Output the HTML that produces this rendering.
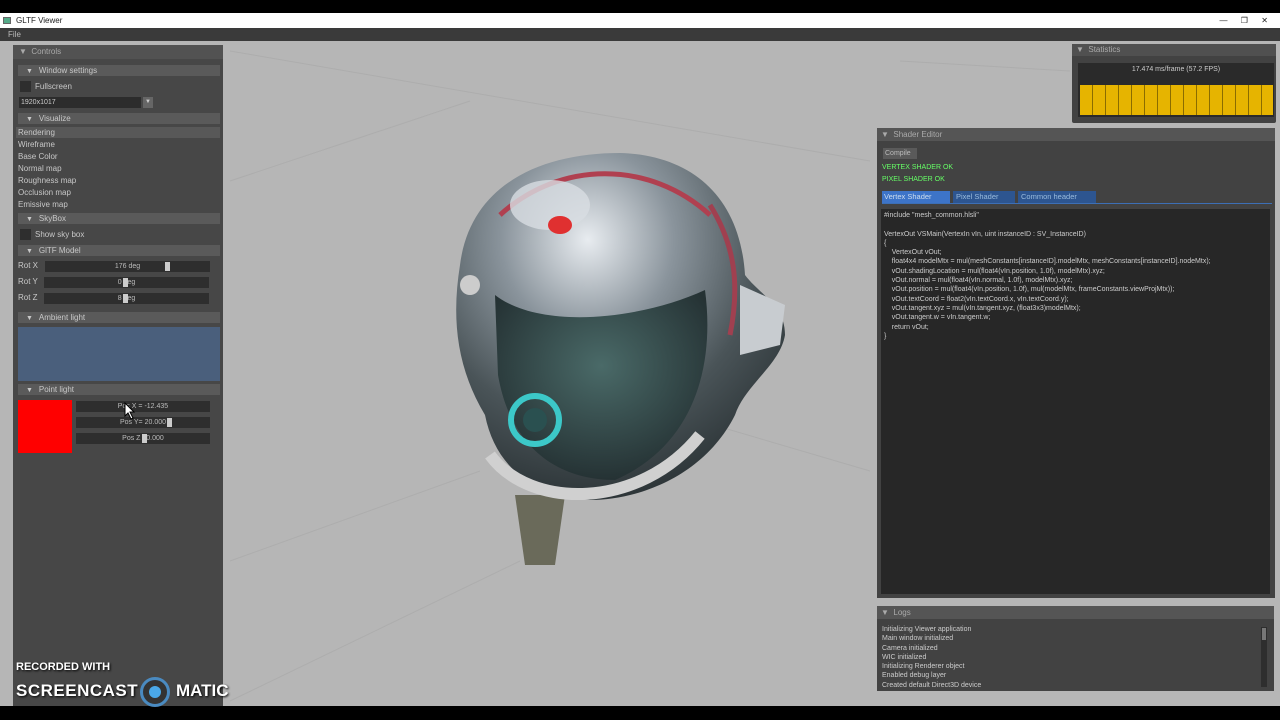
<!DOCTYPE html>
<html><head><meta charset="utf-8"><style>
*{margin:0;padding:0;box-sizing:border-box}
body{width:1280px;height:720px;background:#b6b6b6;font-family:"Liberation Sans",sans-serif;font-size:8px;color:#ddd;position:relative;overflow:hidden}
.a{position:absolute}
.hd{position:absolute;background:#5a5a5a;color:#c8c8c8;height:11px;line-height:11px;padding-left:8px;font-size:8px}
.hd:before{content:"▼ ";font-size:7px;margin-right:4px}
.it{position:absolute;left:18px;color:#c8c8c8;font-size:8px}
.sl{position:absolute;background:#2e2e2e;height:11px;color:#bbb;text-align:center;line-height:11px;font-size:7px}
.kn{position:absolute;top:1px;width:5px;height:9px;background:#ccc}
.code div{white-space:pre;line-height:9.3px;font-size:7px;color:#ccc}
</style></head><body>
<div class="a" style="left:0;top:0;width:1280px;height:13px;background:#000"></div>
<div class="a" style="left:0;top:13px;width:1280px;height:15px;background:#fff;color:#222;font-size:8px;line-height:15px;padding-left:16px">GLTF Viewer<span style="position:absolute;right:12px">—&nbsp;&nbsp;&nbsp;&nbsp;&nbsp;&nbsp;❐&nbsp;&nbsp;&nbsp;&nbsp;&nbsp;&nbsp;✕</span></div>
<div class="a" style="left:3px;top:17px;width:8px;height:7px;background:#5a8;border:1px solid #666"></div>
<div class="a" style="left:0;top:28px;width:1280px;height:13px;background:#3a3a3a;color:#bbb;line-height:13px;padding-left:8px">File</div>
<div class="a" style="left:0;top:706px;width:1280px;height:14px;background:#000"></div>
<svg class="a" style="left:0;top:41px" width="1280" height="665"><g stroke="#adadad" stroke-width="1" fill="none"><path d="M230 10 L870 120"/><path d="M900 20 L1070 30"/><path d="M230 140 L470 60"/><path d="M230 520 L480 430"/><path d="M700 380 L870 430"/><path d="M230 660 L520 520"/></g></svg>
<svg class="a" style="left:440px;top:145px" width="360" height="430">
<defs><radialGradient id="g1" cx=".4" cy=".25" r=".75"><stop offset="0" stop-color="#e8ecf0"/><stop offset=".35" stop-color="#8a949c"/><stop offset=".7" stop-color="#4a5458"/><stop offset="1" stop-color="#2d3538"/></radialGradient>
<radialGradient id="g2" cx=".5" cy=".4" r=".6"><stop offset="0" stop-color="#4a6a68"/><stop offset="1" stop-color="#253234"/></radialGradient></defs>
<path d="M20 120 C30 40 100 8 180 8 C250 10 300 50 305 130 C320 150 345 160 345 190 C340 220 305 240 295 270 C265 330 200 355 150 355 C90 350 55 320 45 270 C15 220 12 170 20 120Z" fill="url(#g1)"/>
<path d="M55 150 C100 185 200 175 265 145 C275 220 255 300 175 335 C115 335 70 300 58 230Z" fill="url(#g2)"/>
<path d="M60 70 C120 15 210 15 270 70" stroke="#b04050" stroke-width="5" fill="none"/>
<path d="M270 60 C295 100 300 140 290 190" stroke="#a04050" stroke-width="5" fill="none"/>
<ellipse cx="110" cy="60" rx="40" ry="25" fill="#d8dde2" opacity=".8"/>
<ellipse cx="120" cy="80" rx="12" ry="9" fill="#e03030"/>
<circle cx="95" cy="275" r="24" fill="none" stroke="#3cc8c8" stroke-width="6"/>
<circle cx="95" cy="275" r="12" fill="#2a5050"/>
<path d="M75 350 L125 350 L115 420 L85 420Z" fill="#6a6a5a"/>
<path d="M50 310 C90 365 200 365 260 290" stroke="#d0d0d0" stroke-width="12" fill="none"/>
<path d="M300 140 L345 160 L340 200 L300 210Z" fill="#c8ccd0"/>
<circle cx="30" cy="140" r="10" fill="#ccc"/>
</svg>
<div class="a" style="left:13px;top:45px;width:210px;height:661px;background:#474747"></div>
<div class="a" style="left:13px;top:45px;width:210px;height:14px;background:#525252;color:#aaa;line-height:14px;padding-left:6px">▼ &nbsp;Controls</div>
<div class="hd" style="left:18px;top:65px;width:202px">Window settings</div>
<div class="a" style="left:20px;top:81px;width:11px;height:11px;background:#2e2e2e"></div>
<div class="it" style="left:35px;top:82px">Fullscreen</div>
<div class="a" style="left:19px;top:97px;width:122px;height:11px;background:#2c2c2c;color:#ccc;padding-left:2px;line-height:11px;font-size:7px">1920x1017</div>
<div class="a" style="left:143px;top:97px;width:10px;height:11px;background:#666;color:#ccc;font-size:6px;text-align:center;line-height:11px">▼</div>
<div class="hd" style="left:18px;top:113px;width:202px">Visualize</div>
<div class="a" style="left:16px;top:127px;width:204px;height:11px;background:#585858"></div>
<div class="it" style="top:128px">Rendering</div>
<div class="it" style="top:140px">Wireframe</div>
<div class="it" style="top:152px">Base Color</div>
<div class="it" style="top:164px">Normal map</div>
<div class="it" style="top:176px">Roughness map</div>
<div class="it" style="top:188px">Occlusion map</div>
<div class="it" style="top:200px">Emissive map</div>
<div class="hd" style="left:18px;top:213px;width:202px">SkyBox</div>
<div class="a" style="left:20px;top:229px;width:11px;height:11px;background:#2e2e2e"></div>
<div class="it" style="left:35px;top:230px">Show sky box</div>
<div class="hd" style="left:18px;top:245px;width:202px">GlTF Model</div>
<div class="it" style="top:261px">Rot X</div><div class="sl" style="left:45px;top:261px;width:165px">176 deg<div class="kn" style="left:120px"></div></div>
<div class="it" style="top:277px">Rot Y</div><div class="sl" style="left:44px;top:277px;width:165px">0 deg<div class="kn" style="left:79px"></div></div>
<div class="it" style="top:293px">Rot Z</div><div class="sl" style="left:44px;top:293px;width:165px">8 deg<div class="kn" style="left:79px"></div></div>
<div class="hd" style="left:18px;top:312px;width:202px">Ambient light</div>
<div class="a" style="left:18px;top:327px;width:202px;height:54px;background:#4a5f7c"></div>
<div class="hd" style="left:18px;top:384px;width:202px">Point light</div>
<div class="a" style="left:18px;top:400px;width:54px;height:53px;background:#f00"></div>
<div class="sl" style="left:76px;top:401px;width:134px">Pos X = -12.435</div>
<div class="sl" style="left:76px;top:417px;width:134px">Pos Y= 20.000<div class="kn" style="left:91px"></div></div>
<div class="sl" style="left:76px;top:433px;width:134px">Pos Z &nbsp;&nbsp;0.000<div class="kn" style="left:66px"></div></div>
<svg class="a" style="left:124px;top:402px" width="12" height="18"><path d="M1 1 L1 14 L4 11 L7 17 L9 16 L6 10 L10 10Z" fill="#fff" stroke="#000" stroke-width="1"/></svg>
<div class="a" style="left:16px;top:661px;color:#fff;font-weight:bold;font-size:11px;text-shadow:1px 1px 2px #000">RECORDED WITH</div>
<div class="a" style="left:16px;top:681px;color:#fff;font-weight:bold;font-size:17px;letter-spacing:.5px;text-shadow:1px 1px 2px #000">SCREENCAST</div>
<div class="a" style="left:140px;top:677px;width:30px;height:30px;border-radius:50%;border:3px solid #4a8ac0;background:#333"></div>
<div class="a" style="left:149px;top:686px;width:12px;height:12px;border-radius:50%;background:#4aa8e8"></div>
<div class="a" style="left:176px;top:681px;color:#fff;font-weight:bold;font-size:17px;text-shadow:1px 1px 2px #000">MATIC</div>
<div class="a" style="left:1072px;top:44px;width:204px;height:79px;background:#424242;border-radius:2px"></div>
<div class="a" style="left:1072px;top:44px;width:204px;height:12px;background:#505050;color:#aaa;line-height:12px;padding-left:4px">▼ &nbsp;Statistics</div>
<div class="a" style="left:1078px;top:63px;width:196px;height:54px;background:#2a2a2a;color:#ccc;text-align:center;font-size:7px;padding-top:3px">17.474 ms/frame (57.2 FPS)</div>
<div class="a" style="left:1080px;top:85px;width:193px;height:30px;background:repeating-linear-gradient(90deg,#e6b400 0 12px,#8a6c00 12px 13px)"></div>
<div class="a" style="left:877px;top:128px;width:398px;height:470px;background:#424242"></div>
<div class="a" style="left:877px;top:128px;width:398px;height:13px;background:#555;color:#aaa;line-height:13px;padding-left:4px">▼ &nbsp;Shader Editor</div>
<div class="a" style="left:883px;top:148px;width:34px;height:11px;background:#5a5a5a;color:#bbb;line-height:11px;padding-left:2px;font-size:7px">Compile</div>
<div class="a" style="left:882px;top:164px;color:#6f6;font-size:7px">VERTEX SHADER OK</div>
<div class="a" style="left:882px;top:176px;color:#6f6;font-size:7px">PIXEL SHADER OK</div>
<div class="a" style="left:882px;top:203px;width:390px;height:1px;background:#3d6fb5"></div>
<div class="a" style="left:882px;top:191px;width:68px;height:12px;background:#3d74c8;color:#cde;line-height:12px;padding-left:2px;font-size:7.5px">Vertex Shader</div>
<div class="a" style="left:953px;top:191px;width:62px;height:12px;background:#2d5590;color:#9bd;line-height:12px;padding-left:3px;font-size:7.5px">Pixel Shader</div>
<div class="a" style="left:1018px;top:191px;width:78px;height:12px;background:#2d5590;color:#9bd;line-height:12px;padding-left:3px;font-size:7.5px">Common header</div>
<div class="a code" style="left:881px;top:209px;width:389px;height:385px;background:#272727;padding:2px 3px">
<div>#include "mesh_common.hlsli"</div><div> </div>
<div>VertexOut VSMain(VertexIn vIn, uint instanceID : SV_InstanceID)</div>
<div>{</div>
<div>    VertexOut vOut;</div>
<div>    float4x4 modelMtx = mul(meshConstants[instanceID].modelMtx, meshConstants[instanceID].nodeMtx);</div>
<div>    vOut.shadingLocation = mul(float4(vIn.position, 1.0f), modelMtx).xyz;</div>
<div>    vOut.normal = mul(float4(vIn.normal, 1.0f), modelMtx).xyz;</div>
<div>    vOut.position = mul(float4(vIn.position, 1.0f), mul(modelMtx, frameConstants.viewProjMtx));</div>
<div>    vOut.textCoord = float2(vIn.textCoord.x, vIn.textCoord.y);</div>
<div>    vOut.tangent.xyz = mul(vIn.tangent.xyz, (float3x3)modelMtx);</div>
<div>    vOut.tangent.w = vIn.tangent.w;</div>
<div>    return vOut;</div>
<div>}</div>
</div>
<div class="a" style="left:877px;top:606px;width:397px;height:85px;background:#424242"></div>
<div class="a" style="left:877px;top:606px;width:397px;height:13px;background:#555;color:#aaa;line-height:13px;padding-left:4px">▼ &nbsp;Logs</div>
<div class="a code" style="left:882px;top:625px;width:380px;height:63px;overflow:hidden">
<div>Initializing Viewer application</div><div>Main window initialized</div><div>Camera initialized</div><div>WIC initialized</div><div>Initializing Renderer object</div><div>Enabled debug layer</div><div>Created default Direct3D device</div>
</div>
<div class="a" style="left:1261px;top:627px;width:6px;height:60px;background:#2e2e2e"><div style="width:4px;margin:1px;height:12px;background:#777"></div></div>
</body></html>
